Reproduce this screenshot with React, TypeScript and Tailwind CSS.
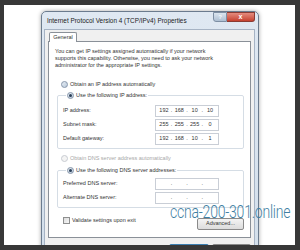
import React from "react";

const font = { fontFamily: '"Liberation Sans", Arial, sans-serif' };

function Radio({ checked, disabled }: { checked?: boolean; disabled?: boolean }) {
  return (
    <span
      className={`flex h-[7px] w-[7px] shrink-0 items-center justify-center rounded-full border ${
        disabled ? "border-[#c8ccd2] bg-[#f4f4f4]" : "border-[#8696aa] bg-gradient-to-br from-[#e8eef5] to-[#b9c9da]"
      }`}
    >
      {checked && <span className="h-[3px] w-[3px] rounded-full bg-[#2a3f57]" />}
    </span>
  );
}

function IpField({ parts }: { parts: string[] }) {
  return (
    <div className="flex h-[12px] w-[64px] items-center justify-around border border-[#c9ced6] bg-white px-[2px] text-[5.5px] text-[#333]">
      <span className="w-[10px] text-center">{parts[0]}</span>
      <span>.</span>
      <span className="w-[10px] text-center">{parts[1]}</span>
      <span>.</span>
      <span className="w-[10px] text-center">{parts[2]}</span>
      <span>.</span>
      <span className="w-[10px] text-center">{parts[3]}</span>
    </div>
  );
}

function Row({ label, parts }: { label: string; parts: string[] }) {
  return (
    <div className="flex items-center">
      <span className="w-[92px] text-[5.5px] text-[#333]">{label}</span>
      <IpField parts={parts} />
    </div>
  );
}

export default function App() {
  return (
    <div className="relative flex h-[250px] w-[300px] bg-[#383838] pb-[5px] pl-[4px] pr-[5px] pt-[5px]" style={font}>
      <div className="flex-1 overflow-hidden bg-white pl-[37px] pt-[6px]">
        {/* window */}
        <div className="flex w-[218px] flex-col rounded-t-[5px] border border-[#6b7b8e] bg-gradient-to-b from-[#dfe8f2] to-[#d3dfeb] pl-[2px] pr-[3px] shadow-[0_0_4px_rgba(0,0,0,0.35)]">
          {/* title bar */}
          <div className="flex h-[17px] items-start">
            <span className="mt-[4px] pl-[3px] text-[6.4px] text-[#222]">Internet Protocol Version 4 (TCP/IPv4) Properties</span>
            <div className="ml-auto flex">
              <div className="flex h-[10px] w-[14px] items-center justify-center rounded-bl-[3px] border border-[#7d8ea3] bg-gradient-to-b from-[#dbe5ef] to-[#aebfd2] text-[6px] font-bold text-[#f4f7fa]">
                ?
              </div>
              <div className="flex h-[10px] w-[28px] items-center justify-center rounded-br-[3px] border border-l-0 border-[#8a3b33] bg-gradient-to-b from-[#e48b7e] to-[#c5402f] text-[7px] font-bold text-white">
                x
              </div>
            </div>
          </div>
          {/* client area */}
          <div className="flex flex-col border border-[#a6b3c4] bg-[#f0f0f0] px-[3px] pt-[2px]">
            <div className="flex">
              <div className="relative z-10 -mb-px ml-[1px] flex h-[10px] w-[28px] items-center justify-center rounded-t-[2px] border border-b-0 border-[#8a9098] bg-white text-[5.5px] text-[#333]">
                General
              </div>
            </div>
            <div className="flex h-[197px] flex-col border border-[#8a9098] bg-white pb-[5px]">
              <p className="pl-[6px] pr-[4px] pt-[6px] text-[5.5px] leading-[7.2px] text-[#333]">
                You can get IP settings assigned automatically if your network
                <br />
                supports this capability. Otherwise, you need to ask your network
                <br />
                administrator for the appropriate IP settings.
              </p>
              <div className="mt-[11px] flex h-[8px] items-center gap-[2px] pl-[12px] text-[5.5px] text-[#333]">
                <Radio />
                <span>Obtain an IP address automatically</span>
              </div>
              <fieldset className="ml-[8px] mr-[6px] mt-[3px] rounded-[2px] border border-[#d5dde5] pb-[3px] pl-[5px]">
                <legend className="ml-[3px] flex h-[8px] items-center gap-[2px] bg-white px-[1px] text-[5.5px] text-[#333]">
                  <Radio checked />
                  <span>Use the following IP address:</span>
                </legend>
                <div className="flex flex-col gap-[2px] pt-[5px]">
                  <Row label="IP address:" parts={["192", "168", "10", "10"]} />
                  <Row label="Subnet mask:" parts={["255", "255", "255", "0"]} />
                  <Row label="Default gateway:" parts={["192", "168", "10", "1"]} />
                </div>
              </fieldset>
              <div className="mt-[6px] flex h-[8px] items-center gap-[2px] pl-[12px] text-[5.5px] text-[#a8a8a8]">
                <Radio disabled />
                <span>Obtain DNS server address automatically</span>
              </div>
              <fieldset className="ml-[8px] mr-[6px] mt-[4px] rounded-[2px] border border-[#d5dde5] pb-[3px] pl-[5px]">
                <legend className="ml-[3px] flex h-[8px] items-center gap-[2px] bg-white px-[1px] text-[5.5px] text-[#333]">
                  <Radio checked />
                  <span>Use the following DNS server addresses:</span>
                </legend>
                <div className="flex flex-col gap-[2px] pt-[3px]">
                  <Row label="Preferred DNS server:" parts={["", "", "", ""]} />
                  <Row label="Alternate DNS server:" parts={["", "", "", ""]} />
                </div>
              </fieldset>
              <div className="mt-[9px] flex items-start justify-between pl-[14px] pr-[6px]">
                <div className="flex h-[8px] items-center gap-[2px] text-[5.5px] text-[#333]">
                  <span className="h-[7px] w-[7px] border border-[#8e8f8f] bg-gradient-to-br from-[#dcdcdc] to-[#f7f7f7]" />
                  <span>Validate settings upon exit</span>
                </div>
                <div className="mt-[1px] flex h-[12px] w-[47px] items-center justify-center rounded-[2px] border border-[#8a8a8a] bg-gradient-to-b from-[#f4f4f4] to-[#dcdcdc] text-[5.5px] text-[#333]">
                  Advanced...
                </div>
              </div>
            </div>
            <div className="mt-[6px] flex justify-end gap-[3px]">
              <div className="h-[12px] w-[40px] rounded-[2px] border border-[#3c7fb1] bg-gradient-to-b from-[#eaf6fd] to-[#bee6fd]" />
              <div className="h-[12px] w-[39px] rounded-[2px] border border-[#8a8a8a] bg-gradient-to-b from-[#f4f4f4] to-[#dcdcdc]" />
            </div>
          </div>
        </div>
      </div>
      <div
        className="absolute left-[170px] top-[201px] origin-left scale-x-[0.78] whitespace-nowrap text-[18px] font-light leading-[22px] tracking-[-0.3px] text-[#3f7fa3]"
        style={{ fontFamily: 'Roboto, sans-serif' }}
      >
        ccna-200-301.online
      </div>
    </div>
  );
}
